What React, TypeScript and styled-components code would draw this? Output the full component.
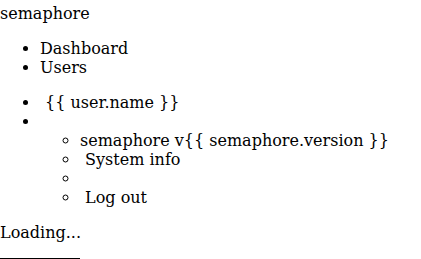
import { FC } from 'react'
import styled, { createGlobalStyle } from 'styled-components'

const GlobalStyle = createGlobalStyle`
  body {
    margin: 0;
    font-family: "DejaVu Serif", serif;
    font-size: 16px;
    color: #000;
    background: #fff;
  }
`

const Brand = styled.div`
  padding-top: 4px;
`

const Menu = styled.ul`
  margin: 16px 0;
  padding-left: 40px;
  list-style: disc;
`

const SubMenu = styled.ul`
  margin: 0;
  padding-left: 40px;
  list-style: circle;
`

const Item = styled.li``

const Toggle = styled.span``

const Status = styled.div``

const Rule = styled.div`
  width: 80px;
  margin-top: 16px;
  border-top: 1px solid #000;
`

const App: FC = () => {
  return (
    <>
      <GlobalStyle />
      <Brand>semaphore</Brand>
      <Menu>
        <Item>Dashboard</Item>
        <Item>Users</Item>
      </Menu>
      <Menu>
        <Item>&nbsp;{'{{ user.name }}'}</Item>
        <Item>
          <Toggle>&nbsp;</Toggle>
          <SubMenu>
            <Item>semaphore v{'{{ semaphore.version }}'}</Item>
            <Item>&nbsp;System info</Item>
            <Item></Item>
            <Item>&nbsp;Log out</Item>
          </SubMenu>
        </Item>
      </Menu>
      <Status>Loading...</Status>
      <Rule />
    </>
  )
}

export default App
